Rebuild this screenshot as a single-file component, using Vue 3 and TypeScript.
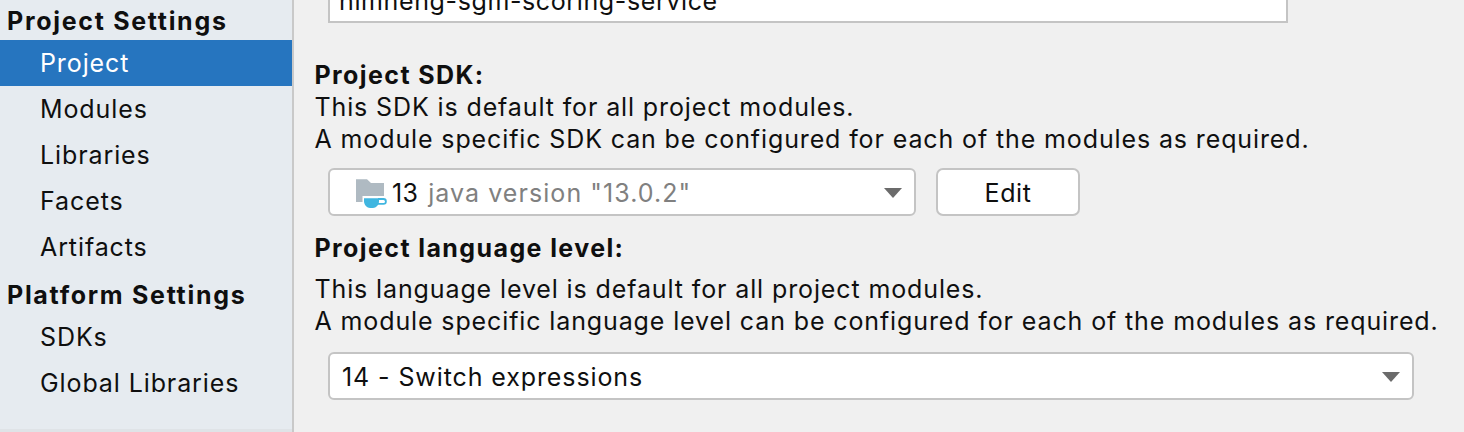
<script setup lang="ts">
const projectItems: { label: string; active?: boolean }[] = [
  { label: 'Project', active: true },
  { label: 'Modules' },
  { label: 'Libraries' },
  { label: 'Facets' },
  { label: 'Artifacts' },
]
const platformItems: string[] = ['SDKs', 'Global Libraries']
</script>

<template>
  <div class="window">
    <aside class="sidebar">
      <div class="heading">Project Settings</div>
      <div v-for="item in projectItems" :key="item.label" class="item" :class="{ active: item.active }">{{ item.label }}</div>
      <div class="heading second">Platform Settings</div>
      <div v-for="item in platformItems" :key="item" class="item">{{ item }}</div>
      <div class="sidebar-rule"></div>
    </aside>
    <main class="content">
      <div class="name-field"><span class="name-text">nimneng-sgm-scoring-service</span></div>
      <div class="label sdk-label">Project SDK:</div>
      <div class="line">This SDK is default for all project modules.</div>
      <div class="line">A module specific SDK can be configured for each of the modules as required.</div>
      <div class="sdk-row">
        <div class="select sdk-select">
          <svg class="jdk" width="34" height="30" viewBox="0 0 34 30">
            <path d="M0 1.300h11l4 3.700h13v19H0z" fill="#afbac2" />
            <path d="M6.500 18h22v12h-22z" fill="#fff" />
            <path d="M8 20.300h15v2.700c0 3.800-3 7-6 7h-3c-3 0-6-3.200-6-7z" fill="#40b6e0" />
            <path d="M22 21h5.500a2.400 2.400 0 0 1 0 4.800H21" fill="none" stroke="#40b6e0" stroke-width="1.800" />
          </svg>
          <span class="version-num">13</span>
          <span class="version-text">java version "13.0.2"</span>
          <span class="arrow"></span>
        </div>
        <button class="edit">Edit</button>
      </div>
      <div class="label lang-label">Project language level:</div>
      <div class="line lang-first">This language level is default for all project modules.</div>
      <div class="line">A module specific language level can be configured for each of the modules as required.</div>
      <div class="select lang-select">
        <span class="lang-value">14 - Switch expressions</span>
        <span class="arrow"></span>
      </div>
    </main>
  </div>
</template>

<style>
html, body { margin: 0; background: #f0f0f0; }
</style>

<style scoped>
.window {
  display: flex;
  width: 1464px;
  height: 432px;
  overflow: hidden;
  background: #f0f0f0;
  color: #0f0f0f;
  font-family: Inter, "Liberation Sans", sans-serif;
  font-size: 25px;
  letter-spacing: 0.88px;
}
.sidebar {
  position: relative;
  width: 292px;
  flex: none;
  background: #e6ebf0;
  border-right: 2px solid #c9c9c9;
  padding-top: 1px;
}
.sidebar-rule {
  position: absolute;
  left: 0;
  right: 0;
  bottom: 0;
  height: 3px;
  background: #dfe3e7;
}
.heading {
  height: 39px;
  line-height: 41px;
  padding-left: 7px;
  font-weight: 700;
  letter-spacing: 1.7px;
}
.heading.second { height: 43px; line-height: 48px; margin-top: 1px; }
.item {
  height: 46px;
  line-height: 46px;
  padding-left: 40px;
  letter-spacing: 0.9px;
}
.item.active { background: #2675bf; color: #fff; }
.content {
  flex: 1;
  min-width: 0;
  padding-left: 20.5px;
}
.name-field {
  box-sizing: border-box;
  width: 960px;
  height: 23px;
  margin-left: 13.5px;
  background: #fff;
  border: solid #c4c4c4;
  border-width: 0 2px 2px;
  position: relative;
  overflow: hidden;
}
.name-text {
  position: absolute;
  left: 9px;
  bottom: 5px;
  line-height: 30px;
  letter-spacing: 0.62px;
}
.label { font-weight: 700; line-height: 32px; letter-spacing: 1.4px; }
.sdk-label { margin-top: 36px; }
.lang-label { margin-top: 16px; }
.line { line-height: 32px; }
.lang-first { margin-top: 9px; }
.sdk-row {
  display: flex;
  align-items: center;
  gap: 20px;
  margin: 13px 0 0 13.5px;
}
.select {
  box-sizing: border-box;
  position: relative;
  display: flex;
  align-items: center;
  height: 48px;
  background: #fff;
  border: 2px solid #c4c4c4;
  border-radius: 6px;
}
.sdk-select { width: 588px; padding-left: 26px; }
.lang-select { width: 1086px; margin: 15px 0 0 13.5px; padding-left: 12px; }
.jdk { flex: none; margin: 2px 2px 0 0; }
.version-num { white-space: pre; letter-spacing: 0.3px; line-height: 46px; padding-top: 2px; }
.version-text { color: #808080; margin-left: 10px; letter-spacing: 1.06px; line-height: 46px; padding-top: 2px; }
.lang-value { letter-spacing: 0.9px; line-height: 46px; padding-top: 2px; }
.arrow {
  position: absolute;
  right: 12px;
  top: 18px;
  width: 0;
  height: 0;
  border-left: 9px solid transparent;
  border-right: 9px solid transparent;
  border-top: 10px solid #6b6b6b;
}
.edit {
  box-sizing: border-box;
  width: 144px;
  height: 48px;
  padding: 2px 0 0;
  background: #fff;
  border: 2px solid #c4c4c4;
  border-radius: 7px;
  color: #0f0f0f;
  font: inherit;
  letter-spacing: 0.6px;
}
</style>
